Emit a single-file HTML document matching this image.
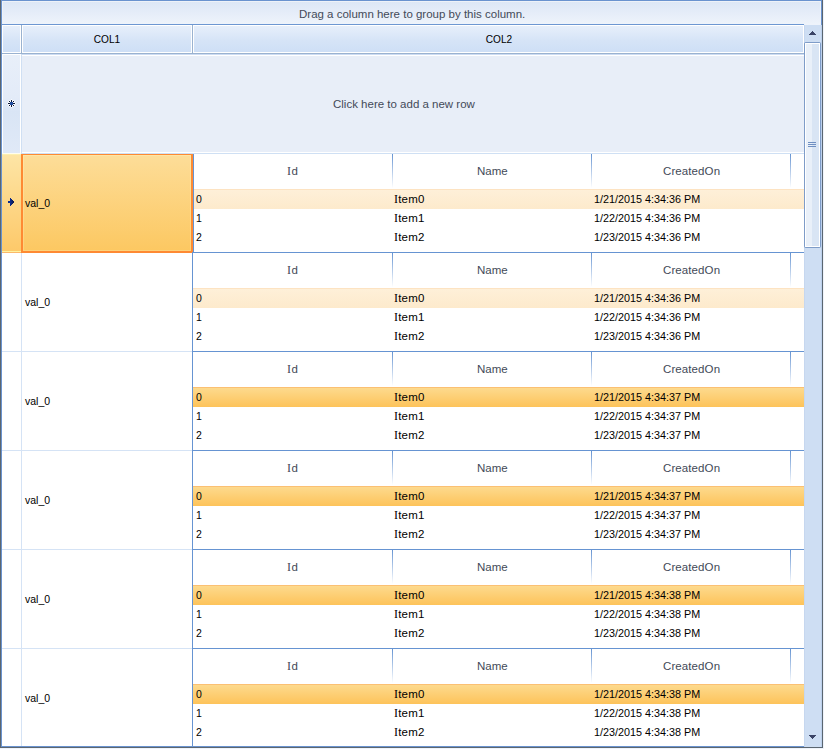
<!DOCTYPE html>
<html><head><meta charset="utf-8"><style>
html,body{margin:0;padding:0;width:824px;height:749px;overflow:hidden;background:#eef3fb}
div{position:absolute;box-sizing:border-box}
.t{font-family:"Liberation Sans",sans-serif;line-height:14px;white-space:nowrap;height:14px}
</style></head><body>
<div style="left:0px;top:0px;width:823px;height:748px;background:#5b6670"></div>
<div style="left:1px;top:0px;width:821px;height:747px;background:#6a93cf"></div>
<div style="left:2px;top:1px;width:819px;height:745px;background:#ffffff"></div>
<div style="left:2px;top:1px;width:819px;height:23px;background:#eef2f8"></div>
<div style="left:3px;top:2px;width:817px;height:22px;background:linear-gradient(#dde7f6,#eef3fb)"></div>
<div class="t" style="left:299px;top:7px;font-size:11.5px;color:#434a58;">Drag a column here to group by this column.</div>
<div style="left:2px;top:24px;width:802px;height:1px;background:#6d97d2"></div>
<div style="left:804px;top:24px;width:17px;height:1px;background:#eef3fb"></div>
<div style="left:2px;top:25px;width:19px;height:28px;background:#fff"></div>
<div style="left:3px;top:26px;width:17px;height:26px;background:linear-gradient(#e7effb 0%,#d6e4f7 55%,#cedff6 100%)"></div>
<div style="left:21px;top:25px;width:1px;height:29px;background:#9ab2d0"></div>
<div style="left:22px;top:25px;width:170px;height:28px;background:#fff"></div>
<div style="left:23px;top:26px;width:168px;height:26px;background:linear-gradient(#e7effb 0%,#d6e4f7 55%,#cedff6 100%)"></div>
<div style="left:192px;top:25px;width:1px;height:29px;background:#9ab2d0"></div>
<div style="left:193px;top:25px;width:611px;height:28px;background:#fff"></div>
<div style="left:194px;top:26px;width:609px;height:26px;background:linear-gradient(#e7effb 0%,#d6e4f7 55%,#cedff6 100%)"></div>
<div style="left:2px;top:53px;width:802px;height:1px;background:#9ab2d0"></div>
<div class="t" style="left:-43.0px;width:300px;text-align:center;top:33px;font-size:10.1px;color:#000">COL1</div>
<div class="t" style="left:349.0px;width:300px;text-align:center;top:33px;font-size:10.1px;color:#000">COL2</div>
<div style="left:2px;top:54px;width:19px;height:100px;background:#fff"></div>
<div style="left:3px;top:55px;width:17px;height:98px;background:linear-gradient(#e8eff9 0%,#e3ebf8 44%,#d9e5f5 58%,#e0e9f7 100%)"></div>
<div style="left:21px;top:54px;width:1px;height:100px;background:#cfdff3"></div>
<div style="left:22px;top:54px;width:782px;height:100px;background:#e8eef8"></div>
<div style="left:22px;top:54px;width:782px;height:1px;background:#cddcf3"></div>
<div style="left:22px;top:55px;width:782px;height:1px;background:#ffffff"></div>
<div style="left:22px;top:152px;width:782px;height:1px;background:#ffffff"></div>
<div style="left:22px;top:153px;width:782px;height:1px;background:#cfe0f4"></div>
<div class="t" style="left:333px;top:97px;font-size:11.5px;color:#434a58;">Click here to add a new row</div>
<svg style="position:absolute;left:7px;top:99px" width="9" height="9" shape-rendering="crispEdges"><rect x="5" y="1" width="1" height="1" fill="#fff" fill-opacity="0.75"/><rect x="4" y="0" width="1" height="1" fill="#fff" fill-opacity="0.75"/><rect x="4" y="8" width="1" height="1" fill="#fff" fill-opacity="0.75"/><rect x="6" y="5" width="1" height="1" fill="#fff" fill-opacity="0.75"/><rect x="5" y="7" width="1" height="1" fill="#fff" fill-opacity="0.75"/><rect x="1" y="3" width="1" height="1" fill="#fff" fill-opacity="0.75"/><rect x="1" y="6" width="1" height="1" fill="#fff" fill-opacity="0.75"/><rect x="2" y="1" width="1" height="1" fill="#fff" fill-opacity="0.75"/><rect x="2" y="7" width="1" height="1" fill="#fff" fill-opacity="0.75"/><rect x="3" y="6" width="1" height="1" fill="#fff" fill-opacity="0.75"/><rect x="7" y="3" width="1" height="1" fill="#fff" fill-opacity="0.75"/><rect x="7" y="6" width="1" height="1" fill="#fff" fill-opacity="0.75"/><rect x="5" y="6" width="1" height="1" fill="#fff" fill-opacity="0.75"/><rect x="6" y="1" width="1" height="1" fill="#fff" fill-opacity="0.75"/><rect x="6" y="7" width="1" height="1" fill="#fff" fill-opacity="0.75"/><rect x="1" y="2" width="1" height="1" fill="#fff" fill-opacity="0.75"/><rect x="2" y="3" width="1" height="1" fill="#fff" fill-opacity="0.75"/><rect x="1" y="5" width="1" height="1" fill="#fff" fill-opacity="0.75"/><rect x="3" y="2" width="1" height="1" fill="#fff" fill-opacity="0.75"/><rect x="7" y="2" width="1" height="1" fill="#fff" fill-opacity="0.75"/><rect x="7" y="5" width="1" height="1" fill="#fff" fill-opacity="0.75"/><rect x="8" y="4" width="1" height="1" fill="#fff" fill-opacity="0.75"/><rect x="0" y="4" width="1" height="1" fill="#fff" fill-opacity="0.75"/><rect x="5" y="2" width="1" height="1" fill="#fff" fill-opacity="0.75"/><rect x="6" y="3" width="1" height="1" fill="#fff" fill-opacity="0.75"/><rect x="3" y="1" width="1" height="1" fill="#fff" fill-opacity="0.75"/><rect x="2" y="5" width="1" height="1" fill="#fff" fill-opacity="0.75"/><rect x="3" y="7" width="1" height="1" fill="#fff" fill-opacity="0.75"/><rect x="4" y="5" width="1" height="1" fill="#1f4c9e"/><rect x="5" y="4" width="1" height="1" fill="#1f4c9e"/><rect x="4" y="2" width="1" height="1" fill="#0b1838"/><rect x="6" y="2" width="1" height="1" fill="#0b1838"/><rect x="3" y="3" width="1" height="1" fill="#1f4c9e"/><rect x="2" y="4" width="1" height="1" fill="#0b1838"/><rect x="5" y="3" width="1" height="1" fill="#1f4c9e"/><rect x="4" y="1" width="1" height="1" fill="#0b1838"/><rect x="4" y="4" width="1" height="1" fill="#1f4c9e"/><rect x="4" y="7" width="1" height="1" fill="#0b1838"/><rect x="6" y="4" width="1" height="1" fill="#0b1838"/><rect x="3" y="5" width="1" height="1" fill="#1f4c9e"/><rect x="2" y="6" width="1" height="1" fill="#0b1838"/><rect x="4" y="3" width="1" height="1" fill="#1f4c9e"/><rect x="4" y="6" width="1" height="1" fill="#0b1838"/><rect x="5" y="5" width="1" height="1" fill="#1f4c9e"/><rect x="6" y="6" width="1" height="1" fill="#0b1838"/><rect x="2" y="2" width="1" height="1" fill="#0b1838"/><rect x="1" y="4" width="1" height="1" fill="#0b1838"/><rect x="3" y="4" width="1" height="1" fill="#1f4c9e"/><rect x="7" y="4" width="1" height="1" fill="#0b1838"/></svg>
<div style="left:2px;top:154px;width:19px;height:97px;background:linear-gradient(#fde5a6,#fdc96a)"></div>
<div style="left:2px;top:153px;width:19px;height:1px;background:#fffdf0"></div>
<div style="left:2px;top:154px;width:19px;height:1px;background:#fdf0b0"></div>
<div style="left:2px;top:251px;width:19px;height:1px;background:#fef2a0"></div>
<div style="left:2px;top:252px;width:19px;height:1px;background:#fbb86a"></div>
<svg style="position:absolute;left:8px;top:198px" width="7" height="8" shape-rendering="crispEdges"><rect x="0" y="3" width="2" height="2" fill="#0c2a8a"/><rect x="2" y="0" width="1" height="8" fill="#0c2a8a"/><rect x="3" y="1" width="1" height="6" fill="#0d2575"/><rect x="4" y="2" width="1" height="4" fill="#0e1f60"/><rect x="5" y="3" width="1" height="2" fill="#101a48"/></svg>
<div style="left:21px;top:154px;width:172px;height:99px;background:#fe8a33"></div>
<div style="left:23px;top:155px;width:168px;height:96px;background:linear-gradient(#fde6a6,#fdd27a)"></div>
<div style="left:24px;top:156px;width:166px;height:94px;background:linear-gradient(#fddd98,#fcc862)"></div>
<div class="t" style="left:25px;top:196px;font-size:10.5px;color:#000;">val_0</div>
<div style="left:193px;top:154px;width:1px;height:98px;background:#6694d2"></div>
<div style="left:392px;top:154px;width:1px;height:34px;background:linear-gradient(#6694d2,rgba(102,148,210,0))"></div>
<div style="left:591px;top:154px;width:1px;height:34px;background:linear-gradient(#6694d2,rgba(102,148,210,0))"></div>
<div style="left:790px;top:154px;width:1px;height:34px;background:linear-gradient(#6694d2,rgba(102,148,210,0))"></div>
<div class="t" style="left:287px;top:164px;font-size:11.5px;color:#434a58;letter-spacing:0.6px"><span style="font-family:Liberation Serif;font-size:12px">I</span>d</div>
<div class="t" style="left:477px;top:164px;font-size:11.5px;color:#434a58;">Name</div>
<div class="t" style="left:663px;top:164px;font-size:11.5px;color:#434a58;letter-spacing:0.1px">CreatedOn</div>
<div style="left:194px;top:189px;width:610px;height:20px;background:linear-gradient(#fef0d9,#fdeacc)"></div>
<div style="left:194px;top:189px;width:610px;height:1px;background:#fde3c2"></div>
<div class="t" style="left:196px;top:192px;font-size:10.5px;color:#000;">0</div>
<div class="t" style="left:394px;top:192px;font-size:11.5px;color:#000;letter-spacing:0.2px"><span style="font-family:Liberation Serif;font-size:12px">I</span>tem0</div>
<div class="t" style="left:594px;top:192px;font-size:10.8px;color:#000;">1/21/2015 4:34:36 PM</div>
<div class="t" style="left:196px;top:211px;font-size:10.5px;color:#000;">1</div>
<div class="t" style="left:394px;top:211px;font-size:11.5px;color:#000;letter-spacing:0.2px"><span style="font-family:Liberation Serif;font-size:12px">I</span>tem1</div>
<div class="t" style="left:594px;top:211px;font-size:10.8px;color:#000;">1/22/2015 4:34:36 PM</div>
<div class="t" style="left:196px;top:230px;font-size:10.5px;color:#000;">2</div>
<div class="t" style="left:394px;top:230px;font-size:11.5px;color:#000;letter-spacing:0.2px"><span style="font-family:Liberation Serif;font-size:12px">I</span>tem2</div>
<div class="t" style="left:594px;top:230px;font-size:10.8px;color:#000;">1/23/2015 4:34:36 PM</div>
<div style="left:21px;top:253px;width:1px;height:98px;background:#d5e3f5"></div>
<div style="left:2px;top:351px;width:190px;height:1px;background:#d5e3f5"></div>
<div class="t" style="left:25px;top:295px;font-size:10.5px;color:#000;">val_0</div>
<div style="left:192px;top:252px;width:612px;height:1px;background:#6694d2"></div>
<div style="left:192px;top:253px;width:1px;height:98px;background:#6694d2"></div>
<div style="left:392px;top:253px;width:1px;height:34px;background:linear-gradient(#6694d2,rgba(102,148,210,0))"></div>
<div style="left:591px;top:253px;width:1px;height:34px;background:linear-gradient(#6694d2,rgba(102,148,210,0))"></div>
<div style="left:790px;top:253px;width:1px;height:34px;background:linear-gradient(#6694d2,rgba(102,148,210,0))"></div>
<div class="t" style="left:287px;top:263px;font-size:11.5px;color:#434a58;letter-spacing:0.6px"><span style="font-family:Liberation Serif;font-size:12px">I</span>d</div>
<div class="t" style="left:477px;top:263px;font-size:11.5px;color:#434a58;">Name</div>
<div class="t" style="left:663px;top:263px;font-size:11.5px;color:#434a58;letter-spacing:0.1px">CreatedOn</div>
<div style="left:193px;top:288px;width:611px;height:20px;background:linear-gradient(#fef0d9,#fdeacc)"></div>
<div style="left:193px;top:288px;width:611px;height:1px;background:#fde3c2"></div>
<div class="t" style="left:196px;top:291px;font-size:10.5px;color:#000;">0</div>
<div class="t" style="left:394px;top:291px;font-size:11.5px;color:#000;letter-spacing:0.2px"><span style="font-family:Liberation Serif;font-size:12px">I</span>tem0</div>
<div class="t" style="left:594px;top:291px;font-size:10.8px;color:#000;">1/21/2015 4:34:36 PM</div>
<div class="t" style="left:196px;top:310px;font-size:10.5px;color:#000;">1</div>
<div class="t" style="left:394px;top:310px;font-size:11.5px;color:#000;letter-spacing:0.2px"><span style="font-family:Liberation Serif;font-size:12px">I</span>tem1</div>
<div class="t" style="left:594px;top:310px;font-size:10.8px;color:#000;">1/22/2015 4:34:36 PM</div>
<div class="t" style="left:196px;top:329px;font-size:10.5px;color:#000;">2</div>
<div class="t" style="left:394px;top:329px;font-size:11.5px;color:#000;letter-spacing:0.2px"><span style="font-family:Liberation Serif;font-size:12px">I</span>tem2</div>
<div class="t" style="left:594px;top:329px;font-size:10.8px;color:#000;">1/23/2015 4:34:36 PM</div>
<div style="left:21px;top:352px;width:1px;height:98px;background:#d5e3f5"></div>
<div style="left:2px;top:450px;width:190px;height:1px;background:#d5e3f5"></div>
<div class="t" style="left:25px;top:394px;font-size:10.5px;color:#000;">val_0</div>
<div style="left:192px;top:351px;width:612px;height:1px;background:#6694d2"></div>
<div style="left:192px;top:352px;width:1px;height:98px;background:#6694d2"></div>
<div style="left:392px;top:352px;width:1px;height:34px;background:linear-gradient(#6694d2,rgba(102,148,210,0))"></div>
<div style="left:591px;top:352px;width:1px;height:34px;background:linear-gradient(#6694d2,rgba(102,148,210,0))"></div>
<div style="left:790px;top:352px;width:1px;height:34px;background:linear-gradient(#6694d2,rgba(102,148,210,0))"></div>
<div class="t" style="left:287px;top:362px;font-size:11.5px;color:#434a58;letter-spacing:0.6px"><span style="font-family:Liberation Serif;font-size:12px">I</span>d</div>
<div class="t" style="left:477px;top:362px;font-size:11.5px;color:#434a58;">Name</div>
<div class="t" style="left:663px;top:362px;font-size:11.5px;color:#434a58;letter-spacing:0.1px">CreatedOn</div>
<div style="left:193px;top:387px;width:611px;height:20px;background:linear-gradient(#fddb90,#fdc35a)"></div>
<div style="left:193px;top:387px;width:611px;height:1px;background:#fbc073"></div>
<div class="t" style="left:196px;top:390px;font-size:10.5px;color:#000;">0</div>
<div class="t" style="left:394px;top:390px;font-size:11.5px;color:#000;letter-spacing:0.2px"><span style="font-family:Liberation Serif;font-size:12px">I</span>tem0</div>
<div class="t" style="left:594px;top:390px;font-size:10.8px;color:#000;">1/21/2015 4:34:37 PM</div>
<div class="t" style="left:196px;top:409px;font-size:10.5px;color:#000;">1</div>
<div class="t" style="left:394px;top:409px;font-size:11.5px;color:#000;letter-spacing:0.2px"><span style="font-family:Liberation Serif;font-size:12px">I</span>tem1</div>
<div class="t" style="left:594px;top:409px;font-size:10.8px;color:#000;">1/22/2015 4:34:37 PM</div>
<div class="t" style="left:196px;top:428px;font-size:10.5px;color:#000;">2</div>
<div class="t" style="left:394px;top:428px;font-size:11.5px;color:#000;letter-spacing:0.2px"><span style="font-family:Liberation Serif;font-size:12px">I</span>tem2</div>
<div class="t" style="left:594px;top:428px;font-size:10.8px;color:#000;">1/23/2015 4:34:37 PM</div>
<div style="left:21px;top:451px;width:1px;height:98px;background:#d5e3f5"></div>
<div style="left:2px;top:549px;width:190px;height:1px;background:#d5e3f5"></div>
<div class="t" style="left:25px;top:493px;font-size:10.5px;color:#000;">val_0</div>
<div style="left:192px;top:450px;width:612px;height:1px;background:#6694d2"></div>
<div style="left:192px;top:451px;width:1px;height:98px;background:#6694d2"></div>
<div style="left:392px;top:451px;width:1px;height:34px;background:linear-gradient(#6694d2,rgba(102,148,210,0))"></div>
<div style="left:591px;top:451px;width:1px;height:34px;background:linear-gradient(#6694d2,rgba(102,148,210,0))"></div>
<div style="left:790px;top:451px;width:1px;height:34px;background:linear-gradient(#6694d2,rgba(102,148,210,0))"></div>
<div class="t" style="left:287px;top:461px;font-size:11.5px;color:#434a58;letter-spacing:0.6px"><span style="font-family:Liberation Serif;font-size:12px">I</span>d</div>
<div class="t" style="left:477px;top:461px;font-size:11.5px;color:#434a58;">Name</div>
<div class="t" style="left:663px;top:461px;font-size:11.5px;color:#434a58;letter-spacing:0.1px">CreatedOn</div>
<div style="left:193px;top:486px;width:611px;height:20px;background:linear-gradient(#fddb90,#fdc35a)"></div>
<div style="left:193px;top:486px;width:611px;height:1px;background:#fbc073"></div>
<div class="t" style="left:196px;top:489px;font-size:10.5px;color:#000;">0</div>
<div class="t" style="left:394px;top:489px;font-size:11.5px;color:#000;letter-spacing:0.2px"><span style="font-family:Liberation Serif;font-size:12px">I</span>tem0</div>
<div class="t" style="left:594px;top:489px;font-size:10.8px;color:#000;">1/21/2015 4:34:37 PM</div>
<div class="t" style="left:196px;top:508px;font-size:10.5px;color:#000;">1</div>
<div class="t" style="left:394px;top:508px;font-size:11.5px;color:#000;letter-spacing:0.2px"><span style="font-family:Liberation Serif;font-size:12px">I</span>tem1</div>
<div class="t" style="left:594px;top:508px;font-size:10.8px;color:#000;">1/22/2015 4:34:37 PM</div>
<div class="t" style="left:196px;top:527px;font-size:10.5px;color:#000;">2</div>
<div class="t" style="left:394px;top:527px;font-size:11.5px;color:#000;letter-spacing:0.2px"><span style="font-family:Liberation Serif;font-size:12px">I</span>tem2</div>
<div class="t" style="left:594px;top:527px;font-size:10.8px;color:#000;">1/23/2015 4:34:37 PM</div>
<div style="left:21px;top:550px;width:1px;height:98px;background:#d5e3f5"></div>
<div style="left:2px;top:648px;width:190px;height:1px;background:#d5e3f5"></div>
<div class="t" style="left:25px;top:592px;font-size:10.5px;color:#000;">val_0</div>
<div style="left:192px;top:549px;width:612px;height:1px;background:#6694d2"></div>
<div style="left:192px;top:550px;width:1px;height:98px;background:#6694d2"></div>
<div style="left:392px;top:550px;width:1px;height:34px;background:linear-gradient(#6694d2,rgba(102,148,210,0))"></div>
<div style="left:591px;top:550px;width:1px;height:34px;background:linear-gradient(#6694d2,rgba(102,148,210,0))"></div>
<div style="left:790px;top:550px;width:1px;height:34px;background:linear-gradient(#6694d2,rgba(102,148,210,0))"></div>
<div class="t" style="left:287px;top:560px;font-size:11.5px;color:#434a58;letter-spacing:0.6px"><span style="font-family:Liberation Serif;font-size:12px">I</span>d</div>
<div class="t" style="left:477px;top:560px;font-size:11.5px;color:#434a58;">Name</div>
<div class="t" style="left:663px;top:560px;font-size:11.5px;color:#434a58;letter-spacing:0.1px">CreatedOn</div>
<div style="left:193px;top:585px;width:611px;height:20px;background:linear-gradient(#fddb90,#fdc35a)"></div>
<div style="left:193px;top:585px;width:611px;height:1px;background:#fbc073"></div>
<div class="t" style="left:196px;top:588px;font-size:10.5px;color:#000;">0</div>
<div class="t" style="left:394px;top:588px;font-size:11.5px;color:#000;letter-spacing:0.2px"><span style="font-family:Liberation Serif;font-size:12px">I</span>tem0</div>
<div class="t" style="left:594px;top:588px;font-size:10.8px;color:#000;">1/21/2015 4:34:38 PM</div>
<div class="t" style="left:196px;top:607px;font-size:10.5px;color:#000;">1</div>
<div class="t" style="left:394px;top:607px;font-size:11.5px;color:#000;letter-spacing:0.2px"><span style="font-family:Liberation Serif;font-size:12px">I</span>tem1</div>
<div class="t" style="left:594px;top:607px;font-size:10.8px;color:#000;">1/22/2015 4:34:38 PM</div>
<div class="t" style="left:196px;top:626px;font-size:10.5px;color:#000;">2</div>
<div class="t" style="left:394px;top:626px;font-size:11.5px;color:#000;letter-spacing:0.2px"><span style="font-family:Liberation Serif;font-size:12px">I</span>tem2</div>
<div class="t" style="left:594px;top:626px;font-size:10.8px;color:#000;">1/23/2015 4:34:38 PM</div>
<div style="left:21px;top:649px;width:1px;height:97px;background:#d5e3f5"></div>
<div class="t" style="left:25px;top:691px;font-size:10.5px;color:#000;">val_0</div>
<div style="left:192px;top:648px;width:612px;height:1px;background:#6694d2"></div>
<div style="left:192px;top:649px;width:1px;height:97px;background:#6694d2"></div>
<div style="left:392px;top:649px;width:1px;height:34px;background:linear-gradient(#6694d2,rgba(102,148,210,0))"></div>
<div style="left:591px;top:649px;width:1px;height:34px;background:linear-gradient(#6694d2,rgba(102,148,210,0))"></div>
<div style="left:790px;top:649px;width:1px;height:34px;background:linear-gradient(#6694d2,rgba(102,148,210,0))"></div>
<div class="t" style="left:287px;top:659px;font-size:11.5px;color:#434a58;letter-spacing:0.6px"><span style="font-family:Liberation Serif;font-size:12px">I</span>d</div>
<div class="t" style="left:477px;top:659px;font-size:11.5px;color:#434a58;">Name</div>
<div class="t" style="left:663px;top:659px;font-size:11.5px;color:#434a58;letter-spacing:0.1px">CreatedOn</div>
<div style="left:193px;top:684px;width:611px;height:20px;background:linear-gradient(#fddb90,#fdc35a)"></div>
<div style="left:193px;top:684px;width:611px;height:1px;background:#fbc073"></div>
<div class="t" style="left:196px;top:687px;font-size:10.5px;color:#000;">0</div>
<div class="t" style="left:394px;top:687px;font-size:11.5px;color:#000;letter-spacing:0.2px"><span style="font-family:Liberation Serif;font-size:12px">I</span>tem0</div>
<div class="t" style="left:594px;top:687px;font-size:10.8px;color:#000;">1/21/2015 4:34:38 PM</div>
<div class="t" style="left:196px;top:706px;font-size:10.5px;color:#000;">1</div>
<div class="t" style="left:394px;top:706px;font-size:11.5px;color:#000;letter-spacing:0.2px"><span style="font-family:Liberation Serif;font-size:12px">I</span>tem1</div>
<div class="t" style="left:594px;top:706px;font-size:10.8px;color:#000;">1/22/2015 4:34:38 PM</div>
<div class="t" style="left:196px;top:725px;font-size:10.5px;color:#000;">2</div>
<div class="t" style="left:394px;top:725px;font-size:11.5px;color:#000;letter-spacing:0.2px"><span style="font-family:Liberation Serif;font-size:12px">I</span>tem2</div>
<div class="t" style="left:594px;top:725px;font-size:10.8px;color:#000;">1/23/2015 4:34:38 PM</div>
<div style="left:804px;top:25px;width:18px;height:722px;background:#cedef3"></div>
<div style="left:804px;top:25px;width:1px;height:722px;background:#c6d7ef"></div>
<div style="left:821px;top:25px;width:1px;height:722px;background:#bcd0ec"></div>
<svg style="position:absolute;left:809px;top:31px" width="7" height="4" shape-rendering="crispEdges"><path d="M3 0h1v1h1v1h1v1h1v1H0V3h1V2h1V1h1z" fill="#3b4466"/></svg>
<svg style="position:absolute;left:809px;top:735px" width="7" height="4" shape-rendering="crispEdges"><path d="M0 0h7v1h-1v1h-1v1h-1v1h-1V3H2V2H1V1H0z" fill="#3b4466"/></svg>
<div style="left:804px;top:42px;width:17px;height:206px;background:#7e9cc8;border-radius:2px"></div>
<div style="left:805px;top:43px;width:15px;height:204px;background:#ffffff"></div>
<div style="left:806px;top:44px;width:6px;height:202px;background:#e9f0f9"></div>
<div style="left:812px;top:44px;width:7px;height:202px;background:#d9e5f4"></div>
<div style="left:808px;top:142px;width:8px;height:1px;background:#6f8fc2"></div>
<div style="left:808px;top:144px;width:8px;height:1px;background:#6f8fc2"></div>
<div style="left:808px;top:146px;width:8px;height:1px;background:#6f8fc2"></div>
</body></html>
